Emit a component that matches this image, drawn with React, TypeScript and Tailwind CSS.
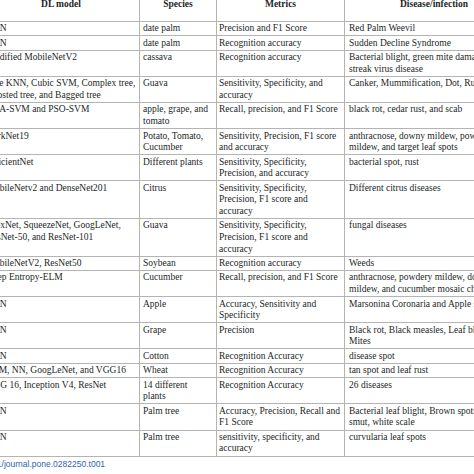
import React from 'react'

type Row = [string, string, string, string]

// literature summary table, cropped on both sides like the source image
const rows: Row[] = [
  ['CNN', 'date palm', 'Precision and F1 Score', 'Red Palm Weevil'],
  ['CNN', 'date palm', 'Recognition accuracy', 'Sudden Decline Syndrome'],
  ['Modified MobileNetV2', 'cassava', 'Recognition accuracy', 'Bacterial blight, green mite damage, brown\nstreak virus disease'],
  ['Fine KNN, Cubic SVM, Complex tree,\nBoosted tree, and Bagged tree', 'Guava', 'Sensitivity, Specificity, and\naccuracy', 'Canker, Mummification, Dot, Rust'],
  ['LDA-SVM and PSO-SVM', 'apple, grape, and\ntomato', 'Recall, precision, and F1 Score', 'black rot, cedar rust, and scab'],
  ['DarkNet19', 'Potato, Tomato,\nCucumber', 'Sensitivity, Precision, F1 score\nand accuracy', 'anthracnose, downy mildew, powdery\nmildew, and target leaf spots'],
  ['EfficientNet', 'Different plants', 'Sensitivity, Specificity,\nPrecision, and accuracy', 'bacterial spot, rust'],
  ['MobileNetv2 and DenseNet201', 'Citrus', 'Sensitivity, Specificity,\nPrecision, F1 score and\naccuracy', 'Different citrus diseases'],
  ['AlexNet, SqueezeNet, GoogLeNet,\nResNet-50, and ResNet-101', 'Guava', 'Sensitivity, Specificity,\nPrecision, F1 score and\naccuracy', 'fungal diseases'],
  ['MobileNetV2, ResNet50', 'Soybean', 'Recognition accuracy', 'Weeds'],
  ['Deep Entropy-ELM', 'Cucumber', 'Recall, precision, and F1 Score', 'anthracnose, powdery mildew, downy\nmildew, and cucumber mosaic chlorosis'],
  ['CNN', 'Apple', 'Accuracy, Sensitivity and\nSpecificity', 'Marsonina Coronaria and Apple scab'],
  ['CNN', 'Grape', 'Precision', 'Black rot, Black measles, Leaf blight,\nMites'],
  ['CNN', 'Cotton', 'Recognition Accuracy', 'disease spot'],
  ['SVM, NN, GoogLeNet, and VGG16', 'Wheat', 'Recognition Accuracy', 'tan spot and leaf rust'],
  ['VGG 16, Inception V4, ResNet', '14 different\nplants', 'Recognition Accuracy', '26 diseases'],
  ['CNN', 'Palm tree', 'Accuracy, Precision, Recall and\nF1 Score', 'Bacterial leaf blight, Brown spots, Black\nsmut, white scale'],
  ['CNN', 'Palm tree', 'sensitivity, specificity, and\naccuracy', 'curvularia leaf spots'],
]

const headers = ['DL model', 'Species', 'Metrics', 'Disease/infection']
const padLeft = ['pl-[3.5px]', 'pl-[3px]', 'pl-[2px]', 'pl-[4px]']

export default function App() {
  return (
    <div className="w-[474px] h-[474px] overflow-hidden bg-white text-[#221f1f] font-['Liberation_Serif',serif]">
      {/* Table */}
      <div className="ml-[-17px] mt-[-1px] w-[540px] grid grid-cols-[156px_77px_128px_179px] text-[9.5px] leading-[11.6px]">
        {headers.map((h, i) => (
          <div
            key={h}
            className={`h-[23px] border-b border-[#b4b4b4] text-center font-bold ${i > 0 ? 'border-l' : ''}`}
          >
            {h}
          </div>
        ))}
        {rows.map((row, r) =>
          row.map((cell, c) => (
            <div
              key={`${r}-${c}`}
              className={`pt-[1.3px] pb-[0.6px] border-b border-[#b4b4b4] whitespace-pre ${padLeft[c]} ${c > 0 ? 'border-l' : ''}`}
            >
              {cell}
            </div>
          ))
        )}
      </div>

      {/* Source link */}
      <div className="mt-[2px] ml-[-83px] whitespace-nowrap text-[8.5px] leading-[10px] text-[#2f62ad] font-['Liberation_Sans',sans-serif]">
        https://doi.org/10.1371/journal.pone.0282250.t001
      </div>
    </div>
  )
}
